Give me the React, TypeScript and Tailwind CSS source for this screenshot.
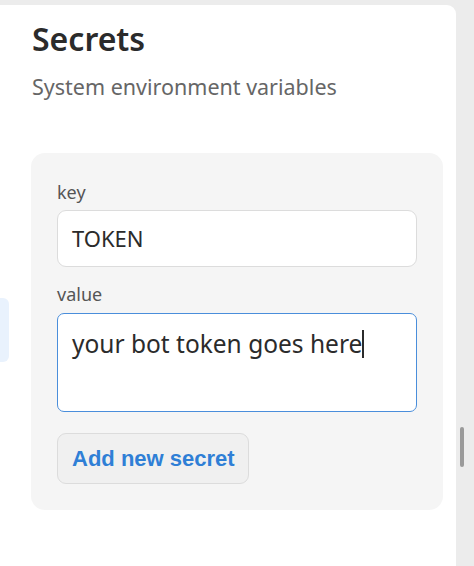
import React from "react";

export default function App() {
  return (
    <div
      className="w-[474px] h-[566px] bg-[#ececec] flex overflow-hidden"
      style={{ fontFamily: '"Noto Sans", "Open Sans", sans-serif' }}
    >
      <div className="w-[456px] mt-[5px] bg-white rounded-tr-[9px] flex">
        <div className="w-[9px] pt-[293px]">
          <div className="w-[9px] h-[64px] bg-[#e9f2fd] rounded-r-[6px]" />
        </div>
        <div className="flex-1 pl-[22px] pr-[13px] pt-[14px]">
          <h1 className="text-[32px] leading-[40px] font-semibold text-[#2b2b2b] pl-[1px]">
            Secrets
          </h1>
          <p className="mt-[14px] text-[21.5px] leading-[28px] text-[#666666] pl-[1px]">
            System environment variables
          </p>
          <div className="mt-[52px] bg-[#f5f5f5] rounded-[14px] px-[26px] pt-[27px] pb-[26px]">
            <label className="block text-[18px] leading-[24px] text-[#555555]">key</label>
            <div className="mt-[6px] h-[57px] bg-white border border-[#dcdcdc] rounded-[9px] flex items-center px-[14px] text-[22px] text-[#2b2b2b]">
              TOKEN
            </div>
            <label className="block mt-[15px] text-[18px] leading-[24px] text-[#555555]">value</label>
            <div className="mt-[7px] h-[99px] bg-white border-[1.5px] border-[#4a8edb] rounded-[7px] px-[14px] pt-[14px] text-[24.5px] leading-[32px] text-[#2b2b2b] whitespace-nowrap">
              your bot token goes here
              <span className="inline-block w-[1.5px] h-[28px] bg-[#2b2b2b] align-[-5px]" />
            </div>
            <button
              className="mt-[21px] h-[51px] w-[192px] bg-[#f0f0f0] border border-[#dcdcdc] rounded-[9px] px-[14px] text-left text-[22px] leading-[28px] font-bold text-[#2f7fd6] whitespace-nowrap"
              style={{ fontFamily: '"Liberation Sans", Arial, sans-serif' }}
            >
              Add new secret
            </button>
          </div>
        </div>
      </div>
      <div className="w-[18px] pt-[427px] pl-[4px]">
        <div className="w-[4px] h-[40px] bg-[#9a9a9a] rounded-[2px]" />
      </div>
    </div>
  );
}
